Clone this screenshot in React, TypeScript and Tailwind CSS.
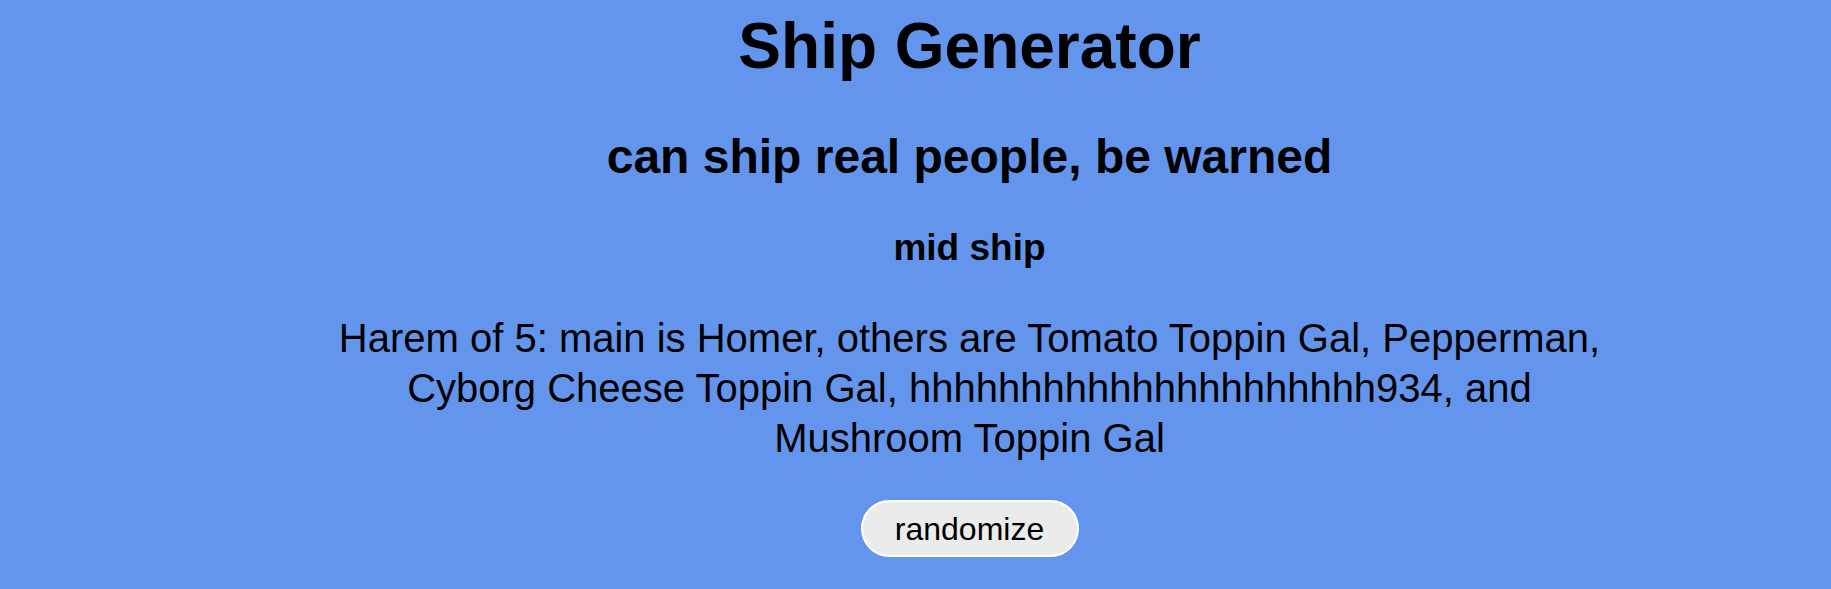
import {useState} from "react";

const NAMES = [
  "Homer",
  "Tomato Toppin Gal",
  "Pepperman",
  "Cyborg Cheese Toppin Gal",
  "hhhhhhhhhhhhhhhhhhhhh934",
  "Mushroom Toppin Gal",
];

function describe(names: string[]) {
  const [main, ...rest] = names;
  const others = rest.slice(0, -1).join(", ") + ", and " + rest[rest.length - 1];
  return `Harem of ${names.length - 1}: main is ${main}, others are ${others}`;
}

export default function App() {
  const [names, setNames] = useState(NAMES);

  const onRandomize = () => {
    const shuffled = [...NAMES].sort(() => Math.random() - 0.5);
    setNames(shuffled);
  };

  return (
    <div
      className="min-h-screen bg-[#6495ed] text-black pl-[108px] flex flex-col items-center text-center"
      style={{fontFamily: '"Liberation Sans", Arial, sans-serif'}}
    >
      <h1 className="mt-[14px] font-bold text-[64px] leading-[64px]">
        Ship Generator
      </h1>
      <h2 className="mt-[55px] font-bold text-[48px] leading-[48px]">
        can ship real people, be warned
      </h2>
      <h3 className="mt-[48px] font-bold text-[37px] leading-[37px]">
        mid ship
      </h3>
      <p className="mt-[47px] max-w-[1300px] text-[40px] leading-[50px]">
        {describe(names)}
      </p>
      <button
        className="mt-[37px] h-[57px] w-[218px] rounded-full border-2 border-white bg-[#ebebeb] text-[32px] leading-[32px] text-black"
        onClick={onRandomize}
      >
        randomize
      </button>
    </div>
  );
}
